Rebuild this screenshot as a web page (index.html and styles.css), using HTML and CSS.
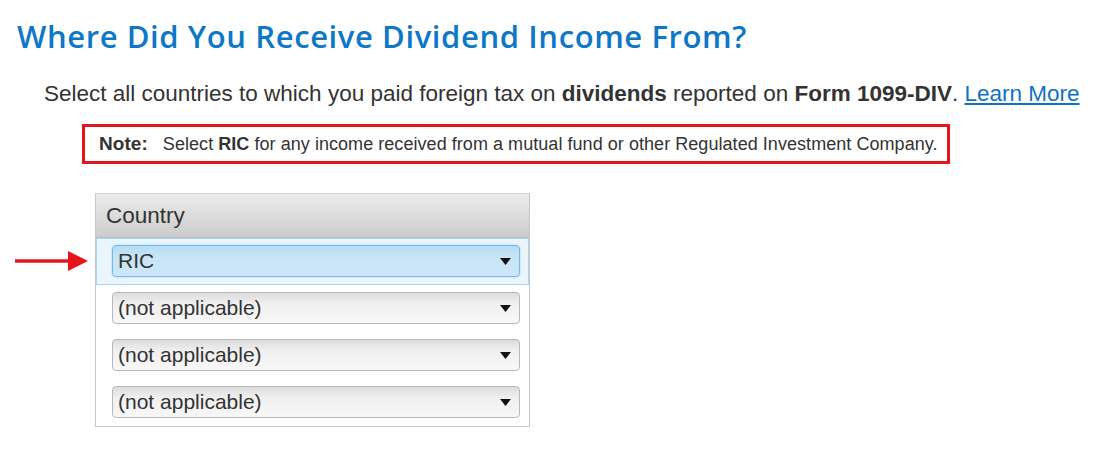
FILE: index.html
```html
<!DOCTYPE html>
<html lang="en">
<head>
<meta charset="utf-8">
<title>Where Did You Receive Dividend Income From?</title>
<link rel="stylesheet" href="styles.css">
</head>
<body>
<div class="page">
  <h1 class="title">Where Did You Receive Dividend Income From?</h1>
  <p class="intro">Select all countries to which you paid foreign tax on <b>dividends</b> reported on <b>Form 1099-DIV</b>. <a href="#" class="link">Learn More</a></p>
  <div class="note"><span class="note-label">Note:</span> Select <b>RIC</b> for any income received from a mutual fund or other Regulated Investment Company.</div>
  <div class="grid-area">
    <div class="arrow-col">
      <svg class="arrow" width="74" height="20" viewBox="0 0 74 20">
        <line x1="0" y1="10" x2="56" y2="10" stroke="#e8141c" stroke-width="3.5"/>
        <polygon points="53,0 73,10 53,20" fill="#e8141c"/>
      </svg>
    </div>
    <div class="country-table">
      <div class="table-head">Country</div>
      <div class="table-row is-active">
        <div class="fake-select is-selected"><span>RIC</span><svg class="caret" width="11" height="7" viewBox="0 0 11 7"><polygon points="0,0 11,0 5.5,7" fill="#111"/></svg></div>
      </div>
      <div class="table-row">
        <div class="fake-select"><span>(not applicable)</span><svg class="caret" width="11" height="7" viewBox="0 0 11 7"><polygon points="0,0 11,0 5.5,7" fill="#111"/></svg></div>
      </div>
      <div class="table-row">
        <div class="fake-select"><span>(not applicable)</span><svg class="caret" width="11" height="7" viewBox="0 0 11 7"><polygon points="0,0 11,0 5.5,7" fill="#111"/></svg></div>
      </div>
      <div class="table-row">
        <div class="fake-select"><span>(not applicable)</span><svg class="caret" width="11" height="7" viewBox="0 0 11 7"><polygon points="0,0 11,0 5.5,7" fill="#111"/></svg></div>
      </div>
    </div>
  </div>
</div>
</body>
</html>
```
FILE: styles.css
```css
html, body {
  margin: 0;
  padding: 0;
  background: #fff;
}
body {
  font-family: "Liberation Sans", Arial, sans-serif;
  color: #333;
}
.page {
  padding: 16px 0 0 17px;
}
.title {
  margin: 0;
  font-family: "Open Sans", "Lato", sans-serif;
  font-weight: 600;
  font-size: 31px;
  letter-spacing: 0.6px;
  line-height: 40px;
  color: #0d77c8;
}
.intro {
  margin: 24px 0 0 27px;
  font-size: 22.5px;
  line-height: 28px;
  color: #333;
}
.link {
  color: #0f72c4;
  text-decoration: underline;
}
.note {
  margin: 16px 0 0 65px;
  width: 836px;
  border: 3px solid #e8141c;
  padding: 7px 12px 7px 14px;
  font-size: 18px;
  letter-spacing: 0.05px;
  line-height: 20px;
  white-space: nowrap;
  color: #333;
}
.note-label {
  font-weight: 700;
  font-size: 19px;
  margin-right: 10px;
}
.grid-area {
  display: flex;
  margin-top: 29px;
  margin-left: -2px;
}
.arrow-col {
  width: 80px;
  padding-top: 58px;
}
.arrow {
  display: block;
}
.country-table {
  width: 433px;
  border: 1px solid #c6c6c6;
  border-top-color: #d4d4d4;
}
.table-head {
  height: 44px;
  box-sizing: border-box;
  padding: 9px 10px 0 10px;
  font-size: 22.5px;
  color: #333;
  background: linear-gradient(#ececec, #cbcbcb);
  border-bottom: 1px solid #bdbdbd;
}
.table-row {
  height: 47px;
  box-sizing: border-box;
  padding: 6px 8px 0 15px;
  border: 1px solid transparent;
}
.table-row.is-active {
  background: #eaf5fc;
  border-color: #a9d5f3;
}
.fake-select {
  height: 32px;
  box-sizing: border-box;
  display: flex;
  align-items: center;
  justify-content: space-between;
  padding: 0 8px 0 5px;
  border: 1px solid #b8b8b8;
  border-radius: 4px;
  background: linear-gradient(#dcdcdc, #efefef 35%, #f8f8f8);
  font-size: 21px;
  color: #333;
}
.fake-select.is-selected {
  border-color: #74b7e8;
  background: linear-gradient(#b7dcf3, #c8e5f6 40%, #cde7f6);
  box-shadow: 0 0 2px #9ed0f2;
}
.caret {
  display: block;
}
```
